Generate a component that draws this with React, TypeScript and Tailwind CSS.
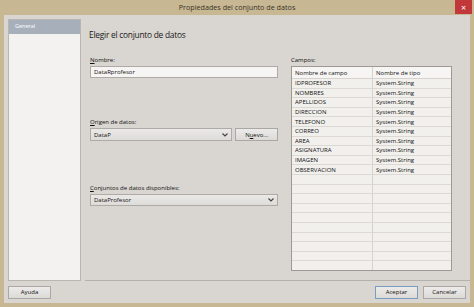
import React from 'react';

const campos = [
  'IDPROFESOR',
  'NOMBRES',
  'APELLIDOS',
  'DIRECCION',
  'TELEFONO',
  'CORREO',
  'AREA',
  'ASIGNATURA',
  'IMAGEN',
  'OBSERVACION',
];

// filas vacias para rellenar la tabla hasta abajo
const filas = [...campos, ...Array(12).fill('')];

const Chevron = () => (
  <svg width="6" height="4" viewBox="0 0 6 4" className="text-[#444]">
    <path d="M0.5 0.5 L3 3 L5.5 0.5" fill="none" stroke="currentColor" strokeWidth="1.2" />
  </svg>
);

const Boton = ({ label, u, primary }: { label: string; u?: number; primary?: boolean }) => (
  <button
    className={`w-[43px] h-[13px] text-[6px] leading-none text-[#111] bg-gradient-to-b from-[#ecebe9] to-[#dcdad7] border ${
      primary ? 'border-[#7a9cc0]' : 'border-[#aaa8a4]'
    }`}
  >
    {u === undefined ? (
      label
    ) : (
      <>
        {label.slice(0, u)}
        <span className="underline">{label[u]}</span>
        {label.slice(u + 1)}
      </>
    )}
  </button>
);

export default function App() {
  return (
    <div
      className="w-[474px] h-[307px] bg-[#c7b793] flex flex-col overflow-hidden"
      style={{ fontFamily: '"Open Sans", "Noto Sans", sans-serif' }}
    >
      {/* barra de titulo */}
      <div className="h-[15px] shrink-0 flex items-center relative">
        <div className="flex-1 text-center text-[7.2px] text-[#3a3325] leading-none">
          Propiedades del conjunto de datos
        </div>
        <div className="absolute right-[2px] top-0 w-[17px] h-[14px] bg-[#c2383a] flex items-center justify-center text-white text-[9px] leading-none">
          ×
        </div>
      </div>

      <div className="flex-1 min-h-0 mx-[4px] mb-[4px] bg-[#d9d5d0] flex flex-col">
        <div className="flex flex-1 min-h-0 pt-[4px] pl-[4px]">
          {/* panel lateral */}
          <div className="w-[73px] bg-[#f3f2f0] border border-[#b9b6b1]">
            <div className="h-[14px] bg-[#a7afbb] text-white text-[5.5px] leading-none flex items-center pl-[6px]">
              General
            </div>
          </div>

          <div className="flex-1 min-h-0 ml-[4px] flex flex-col border-b border-[#b4b1ac]">
            <div className="mt-[10px] pl-[4px] text-[8.4px] tracking-[-0.25px] leading-[12px] text-[#1a1a1a]">
              Elegir el conjunto de datos
            </div>

            <div className="flex flex-1 min-h-0 mt-[11px] pl-[5px]">
              <div className="w-[188px] flex flex-col text-[6px] text-[#111]">
                <div className="mt-[4px] leading-[9px]">
                  <span className="underline">N</span>ombre:
                </div>
                <div className="mt-[1px] h-[12px] bg-[#f6f5f3] border border-[#aeaba6] pl-[3px] flex items-center leading-none">
                  DataRprofesor
                </div>

                <div className="mt-[40px] leading-[9px]">
                  <span className="underline">O</span>rigen de datos:
                </div>
                <div className="mt-[1px] flex gap-[3px]">
                  <div className="w-[143px] h-[13px] bg-gradient-to-b from-[#eae9e7] to-[#dedcd9] border border-[#aeaba6] pl-[3px] pr-[3px] flex items-center justify-between leading-none">
                    <span>DataP</span>
                    <Chevron />
                  </div>
                  <Boton label="Nuevo..." u={1} />
                </div>

                <div className="mt-[43px] leading-[9px]">
                  <span className="underline">C</span>onjuntos de datos disponibles:
                </div>
                <div className="mt-[1px] h-[12px] bg-gradient-to-b from-[#eae9e7] to-[#dedcd9] border border-[#aeaba6] pl-[3px] pr-[3px] flex items-center justify-between leading-none">
                  <span>DataProfesor</span>
                  <Chevron />
                </div>
              </div>

              <div className="ml-[13px] w-[161px] min-h-0 flex flex-col text-[6px] text-[#111] mb-[9px]">
                <div className="mt-[4px] leading-[9px]">Campos:</div>
                <div className="mt-[1px] flex-1 min-h-0 overflow-hidden border border-[#9d9a95] bg-[#f1f0ed]">
                  <div className="flex h-[12px] items-center border-b border-[#d6d3ce] bg-[#f6f5f3]">
                    <div className="w-[81px] pl-[3px] border-r border-[#d6d3ce] h-full flex items-center leading-none">
                      Nombre de campo
                    </div>
                    <div className="flex-1 pl-[3px] leading-none">Nombre de tipo</div>
                  </div>
                  {filas.map((c, i) => (
                    <div key={i} className="flex h-[9.6px] border-b border-[#dcd9d4]">
                      <div className="w-[81px] pl-[3px] border-r border-[#d6d3ce] flex items-center leading-none">
                        {c}
                      </div>
                      <div className="flex-1 pl-[3px] flex items-center leading-none">
                        {c ? 'System.String' : ''}
                      </div>
                    </div>
                  ))}
                </div>
              </div>
            </div>
          </div>
        </div>

        {/* botones inferiores */}
        <div className="h-[22px] shrink-0 flex items-center pl-[4px] pr-[4px]">
          <Boton label="Ayuda" />
          <div className="flex-1" />
          <Boton label="Aceptar" primary />
          <div className="w-[5px]" />
          <Boton label="Cancelar" />
        </div>
      </div>
    </div>
  );
}
